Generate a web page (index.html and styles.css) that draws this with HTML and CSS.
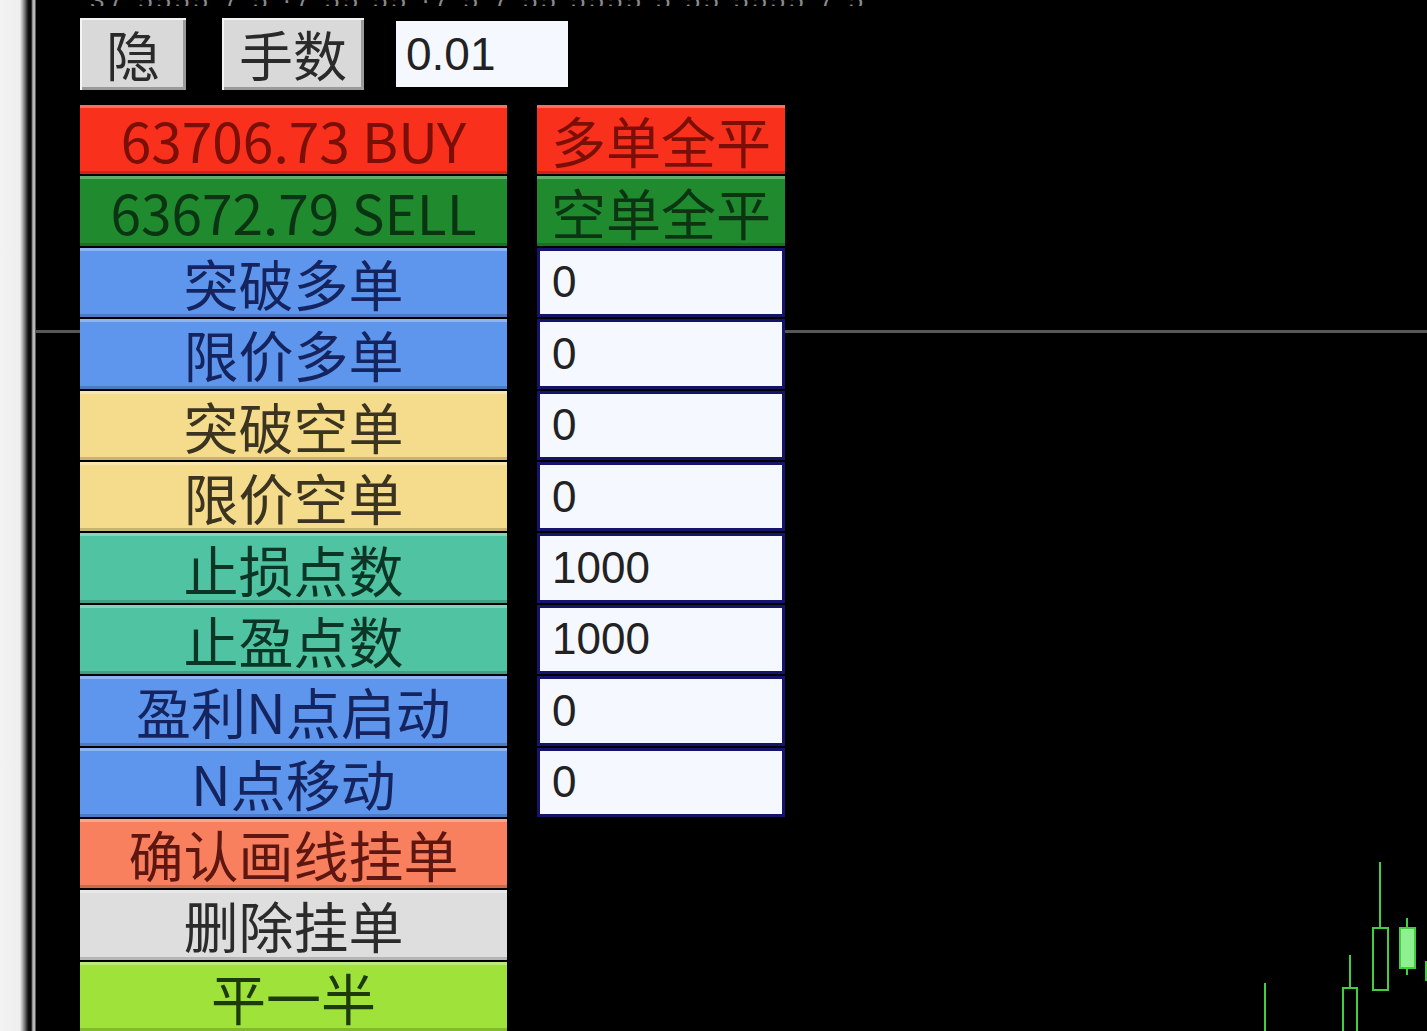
FILE: index.html
```html
<!DOCTYPE html>
<html lang="zh-CN">
<head>
    <meta charset="UTF-8">
    <meta name="viewport" content="width=device-width, initial-scale=1.0">
    <title>交易面板</title>
    <link rel="stylesheet" href="styles.css">
</head>
<body>
    <div class="screen">
        <div class="edge"></div>

        <div class="chart">
            <div class="ticker">37.5555,7.5 ·7.55.55 ·7.5.7.55 5555.5.55 5555.7.5</div>
            <div class="hline"></div>

            <!-- 右下角K线 -->
            <svg class="candles" width="200" height="180" viewBox="0 0 200 180">
                <g stroke="#3fcf3f" stroke-width="2" fill="none">
                    <line x1="38" y1="132" x2="38" y2="180"/>
                    <line x1="123" y1="104" x2="123" y2="137"/>
                    <rect x="116" y="137" width="14" height="48"/>
                    <line x1="153" y1="11" x2="153" y2="77"/>
                    <rect x="146" y="77" width="15" height="62"/>
                    <line x1="180" y1="67" x2="180" y2="124"/>
                    <rect x="173" y="77" width="15" height="40" fill="#8ff08f"/>
                    <line x1="199" y1="110" x2="199" y2="130"/>
                </g>
            </svg>

            <div class="panel">
                <div class="toolbar">
                    <button class="tool hide">隐</button>
                    <button class="tool lots">手数</button>
                    <div class="edit lot">0.01</div>
                </div>

                <div class="grid">
                    <button class="btn red price">63706.73 BUY</button>
                    <button class="btn red">多单全平</button>

                    <button class="btn green price">63672.79 SELL</button>
                    <button class="btn green">空单全平</button>

                    <button class="btn blue">突破多单</button>
                    <div class="edit">0</div>

                    <button class="btn blue">限价多单</button>
                    <div class="edit">0</div>

                    <button class="btn yellow">突破空单</button>
                    <div class="edit">0</div>

                    <button class="btn yellow">限价空单</button>
                    <div class="edit">0</div>

                    <button class="btn teal">止损点数</button>
                    <div class="edit">1000</div>

                    <button class="btn teal">止盈点数</button>
                    <div class="edit">1000</div>

                    <button class="btn blue">盈利N点启动</button>
                    <div class="edit">0</div>

                    <button class="btn blue">N点移动</button>
                    <div class="edit">0</div>

                    <button class="btn salmon">确认画线挂单</button>
                    <div></div>

                    <button class="btn gray">删除挂单</button>
                    <div></div>

                    <button class="btn lime">平一半</button>
                    <div></div>
                </div>
            </div>
        </div>
    </div>
</body>
</html>
```

FILE: styles.css
```css
body {
    margin: 0;
    padding: 0;
    background-color: #000;
    font-family: "Noto Sans CJK SC", "Liberation Sans", sans-serif;
    overflow: hidden;
}

.screen {
    display: flex;
    height: 1031px;
}

/* 左侧窗口边框 */
.edge {
    width: 36px;
    flex-shrink: 0;
    background: linear-gradient(to right, #f3f3f3 0, #eeeeee 20px, #8a8a8a 24px, #151515 28px, #000 31px, #b8b8b8 33px, #b8b8b8 35px, #000 36px);
}

.chart {
    flex: 1;
    position: relative;
    overflow: hidden;
}

.ticker {
    height: 6px;
    overflow: hidden;
    padding-left: 54px;
    color: #8a8a8a;
    font-family: "Liberation Sans", sans-serif;
    font-size: 26px;
    line-height: 0;
    letter-spacing: 4px;
    white-space: nowrap;
}

.hline {
    position: absolute;
    top: 330px;
    left: 0;
    right: 0;
    height: 3px;
    background-color: #575757;
}

.candles {
    position: absolute;
    right: 0;
    bottom: 0;
}

/* 面板 */
.panel {
    position: relative;
    z-index: 1;
    width: 705px;
    margin-left: 44px;
    background-color: #000;
}

.toolbar {
    display: flex;
    align-items: center;
    height: 72px;
    margin-top: 12px;
}

.tool {
    height: 72px;
    padding: 0;
    border: none;
    background-color: #d9d9d9;
    box-shadow: inset 2px 2px 0 #f4f4f4, inset -3px -3px 0 #9a9a9a;
    color: #2a2a2a;
    font-family: "Noto Sans CJK SC", sans-serif;
    font-size: 54px;
    line-height: 1;
}

.hide {
    width: 106px;
}

.lots {
    width: 142px;
    margin-left: 36px;
}

.edit {
    box-sizing: border-box;
    display: flex;
    align-items: center;
    padding-left: 12px;
    background-color: #f5f8ff;
    border: 3px solid #14146a;
    color: #222;
    font-family: "Liberation Sans", sans-serif;
    font-size: 44px;
}

.edit.lot {
    width: 172px;
    height: 66px;
    margin-left: 32px;
    border: none;
    padding-left: 10px;
    font-size: 46px;
}

.grid {
    display: grid;
    grid-template-columns: 427px 248px;
    grid-auto-rows: 69.4px;
    column-gap: 30px;
    row-gap: 2px;
    margin-top: 15px;
}

.btn {
    padding: 0;
    border: none;
    font-family: "Noto Sans CJK SC", sans-serif;
    font-size: 55px;
    line-height: 1;
    text-align: center;
    white-space: nowrap;
    box-shadow: inset 0 3px 0 rgba(255, 255, 255, 0.3), inset 0 -3px 0 rgba(0, 0, 0, 0.18);
}

.red {
    background-color: #f8301c;
    color: #7a0f08;
}

.green {
    background-color: #1f8a2e;
    color: #0b3412;
}

.blue {
    background-color: #5d96ec;
    color: #15245e;
}

.yellow {
    background-color: #f4dc8c;
    color: #3a3420;
}

.teal {
    background-color: #4fc3a2;
    color: #0b3626;
}

.salmon {
    background-color: #f8805f;
    color: #5e1710;
}

.gray {
    background-color: #dedede;
    color: #2b2b2b;
}

.lime {
    background-color: #9fe33a;
    color: #1d3a0c;
}
```
